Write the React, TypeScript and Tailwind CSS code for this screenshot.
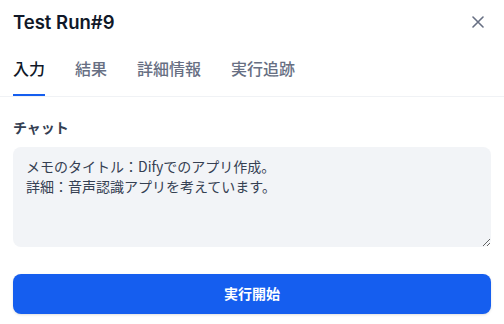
import { useState } from 'react';

const tabs = ['入力', '結果', '詳細情報', '実行追跡'];

export default function App() {
  const [active, setActive] = useState(0);
  const [text, setText] = useState('メモのタイトル：Difyでのアプリ作成。\n詳細：音声認識アプリを考えています。');

  return (
    <div className="w-[504px] h-[324px] bg-white overflow-hidden font-['Inter','Noto_Sans_CJK_JP',sans-serif]">
      {/* Header */}
      <div className="flex items-center justify-between h-[44px] pl-[13px] pr-[16px]">
        <h1 className="text-[18.5px] font-semibold text-[#101828] leading-6">Test Run#9</h1>
        <button className="w-5 h-5 flex items-center justify-center text-[#676f83]">
          <svg width="12" height="12" viewBox="0 0 12 12" fill="none">
            <path d="M1 1L11 11M11 1L1 11" stroke="currentColor" strokeWidth="1.6" strokeLinecap="round" />
          </svg>
        </button>
      </div>

      {/* Tabs */}
      <div className="flex gap-[30px] px-[13px] border-b border-[#f0f2f5]">
        {tabs.map((t, i) => (
          <button
            key={t}
            onClick={() => setActive(i)}
            className={
              i === active
                ? 'pt-[14px] pb-[14px] leading-[22px] text-base font-medium text-[#101828] border-b-2 border-[#155eef]'
                : 'pt-[14px] pb-[14px] leading-[22px] text-base font-medium text-[#676f83] border-b-2 border-transparent'
            }
          >
            {t}
          </button>
        ))}
      </div>

      {/* Body */}
      <div className="px-[13px]">
        <div className="mt-[21px] text-sm leading-5 font-semibold text-[#354052]">チャット</div>
        <textarea
          value={text}
          onChange={(e) => setText(e.target.value)}
          className="mt-[9px] block w-full h-[100px] rounded-lg bg-[#f2f4f7] px-[13px] py-[9px] text-sm leading-5 text-[#354052] outline-none resize-y font-['Noto_Sans_CJK_JP',sans-serif]"
        />
        <button className="mt-[27px] w-full h-[40px] rounded-lg bg-[#155eef] text-white text-sm font-semibold shadow-sm">
          実行開始
        </button>
      </div>
    </div>
  );
}
